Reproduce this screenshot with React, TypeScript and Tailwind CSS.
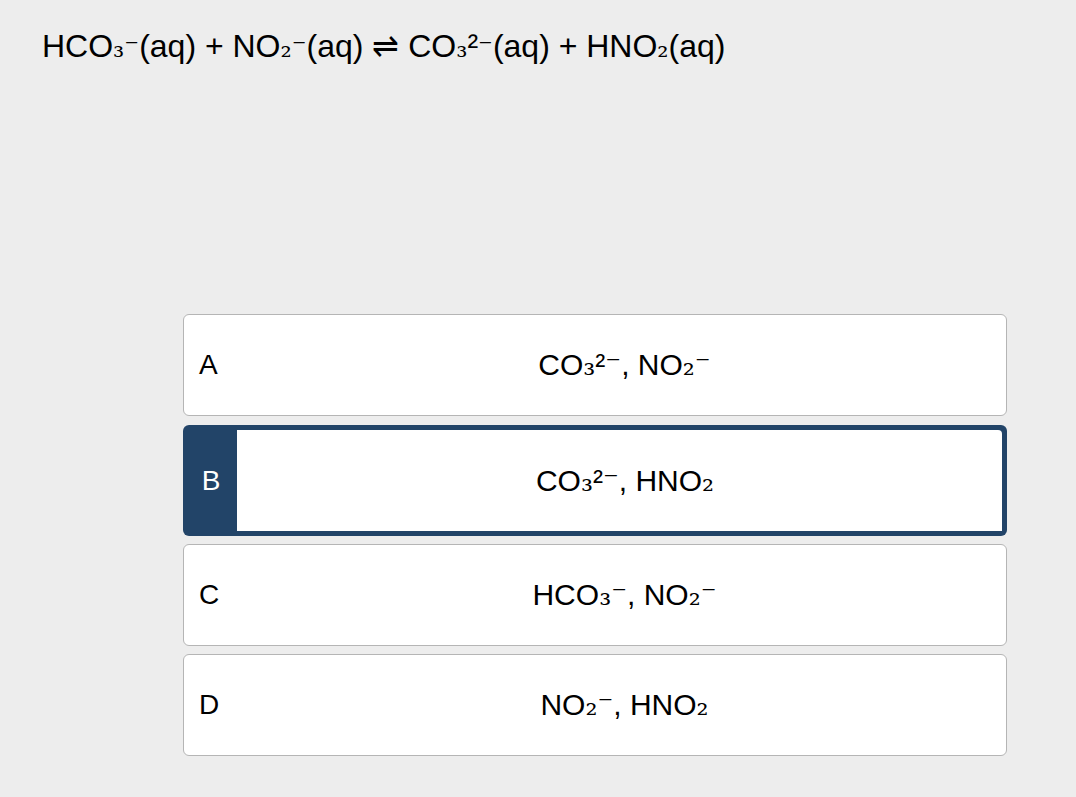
import React from "react";

const options = [
  { letter: "A", text: "CO₃²⁻, NO₂⁻" },
  { letter: "B", text: "CO₃²⁻, HNO₂" },
  { letter: "C", text: "HCO₃⁻, NO₂⁻" },
  { letter: "D", text: "NO₂⁻, HNO₂" },
];

const selected = "B";

// subscript digits and the superscript minus come from fallback faces in the original
function Formula({ text, small = "" }: { text: string; small?: string }) {
  const parts = text.split(/([₀-₉]+|⁻+)/);
  return (
    <>
      {parts.map((p, i) => {
        if (/^[₀-₉]+$/.test(p)) {
          return (
            <span key={i} className={`font-['DejaVu_Serif',serif] ${small}`}>
              {p}
            </span>
          );
        }
        if (/^⁻+$/.test(p)) {
          return (
            <span key={i} className={`font-['DejaVu_Sans',sans-serif] ${small}`}>
              {p}
            </span>
          );
        }
        return <React.Fragment key={i}>{p}</React.Fragment>;
      })}
    </>
  );
}

export default function App() {
  return (
    <div className="min-h-[797px] w-full bg-[#ededed] font-['Liberation_Sans',Arial,sans-serif] text-black">
      <div className="px-[42px] pt-[30px]">
        <p className="text-[32px] leading-none whitespace-nowrap">
          <Formula
            text="HCO₃⁻(aq) + NO₂⁻(aq) ⇌ CO₃²⁻(aq) + HNO₂(aq)"
            small="text-[28px]"
          />
        </p>
      </div>

      <div className="ml-[183px] mt-[252px] flex w-[824px] flex-col">
        {options.map((opt, i) => {
          const isSelected = opt.letter === selected;
          const gap = i === 0 ? "" : i === 1 ? "mt-[9px]" : "mt-2";

          if (isSelected) {
            return (
              <div
                key={opt.letter}
                className={`${gap} flex h-[111px] rounded-md bg-[#224468] py-[5px] pr-[5px]`}
              >
                <div className="flex w-[54px] items-center justify-center pl-[2px] text-[28px] text-white">
                  {opt.letter}
                </div>
                <div className="flex flex-1 items-center justify-center rounded-tr-sm bg-white pl-[11px] text-[30px] leading-none whitespace-nowrap">
                  <Formula text={opt.text} />
                </div>
              </div>
            );
          }

          return (
            <div
              key={opt.letter}
              className={`${gap} flex h-[102px] rounded-md border border-[#b5b5b5] bg-white`}
            >
              <div className="flex w-[53px] items-center pl-[15px] text-[28px]">
                {opt.letter}
              </div>
              <div className="flex flex-1 items-center justify-center pl-[6px] text-[30px] leading-none whitespace-nowrap">
                <Formula text={opt.text} />
              </div>
            </div>
          );
        })}
      </div>
    </div>
  );
}
